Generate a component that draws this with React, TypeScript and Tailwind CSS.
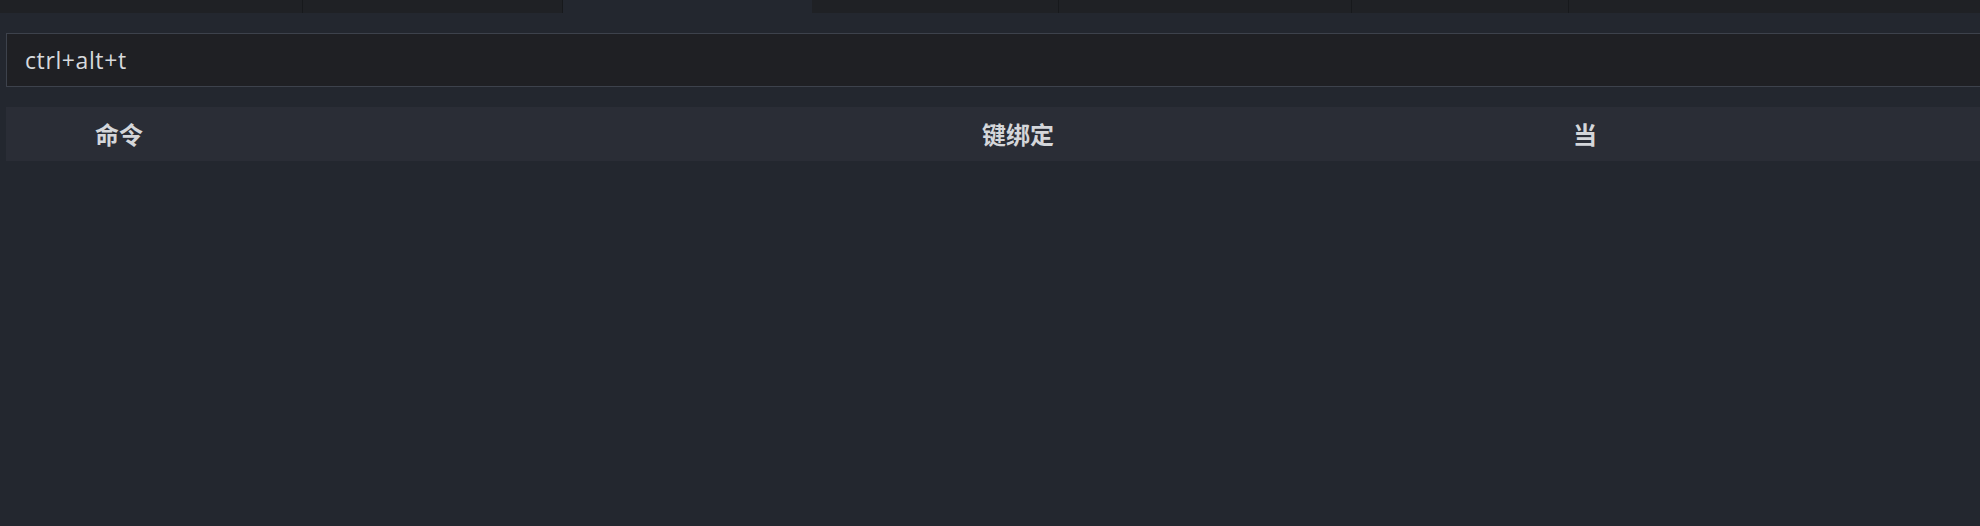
import React from 'react'

const tabs = [
  { w: 'w-[303px]', active: false },
  { w: 'w-[260px]', active: false },
  { w: 'w-[249px]', active: true },
  { w: 'w-[247px]', active: false },
  { w: 'w-[293px]', active: false },
  { w: 'w-[217px]', active: false },
]

function TabStrip() {
  return (
    <div className="flex h-[13px] bg-[#1f2125]">
      {tabs.map((t, i) => (
        <div
          key={i}
          className={`${t.w} h-full flex-shrink-0 ${
            t.active ? 'bg-[#23272f]' : 'border-r border-[#17191c]'
          }`}
        />
      ))}
      <div className="flex-1" />
    </div>
  )
}

export default function App() {
  return (
    <div className="w-[1980px] h-[526px] overflow-hidden bg-[#23272f] font-['Open_Sans','Noto_Sans_CJK_SC',sans-serif]">
      <TabStrip />

      {/* Search box */}
      <div className="pl-[6px] pt-[20px] w-[2010px]">
        <div className="h-[54px] bg-[#1f2024] border border-[#3d424c] flex items-center pl-[18px]">
          <span className="text-[23px] tracking-[0.6px] text-[#d6d9dd]">ctrl+alt+t</span>
        </div>
      </div>

      {/* Table header */}
      <div className="pl-[6px] pt-[20px]">
        <div className="h-[54px] bg-[#2a2d36] grid grid-cols-[976px_591px_1fr] items-center text-[24px] font-bold text-[#d4d6da] font-['Noto_Sans_CJK_SC',sans-serif]">
          <div className="pl-[89px]">命令</div>
          <div>键绑定</div>
          <div>当</div>
        </div>
      </div>
    </div>
  )
}
